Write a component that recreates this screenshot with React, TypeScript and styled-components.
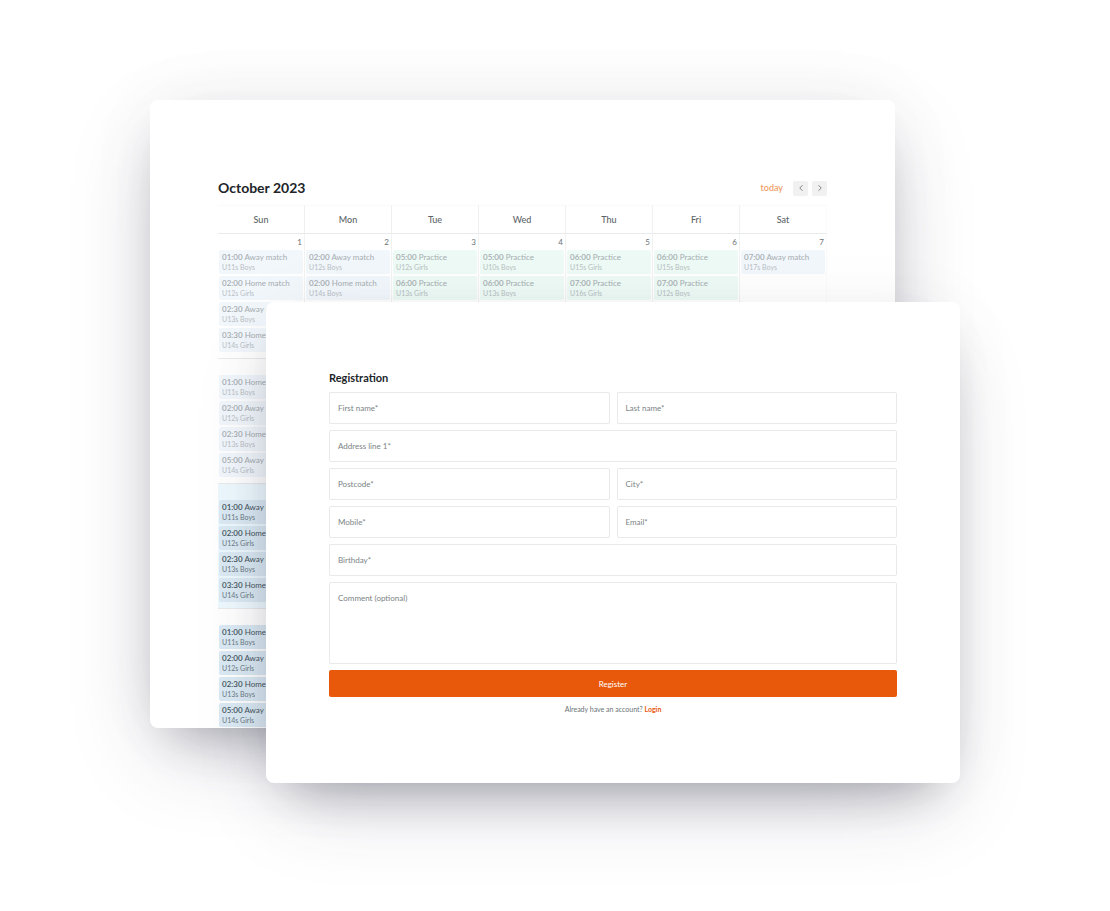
import React from "react";
import styled, { createGlobalStyle, css } from "styled-components";
import { ChevronLeft, ChevronRight } from "lucide-react";

const GlobalStyle = createGlobalStyle`
  *, *::before, *::after { box-sizing: border-box; }
  body {
    margin: 0;
    background: #fff;
    color: #212529;
    font-family: Lato, "Open Sans", sans-serif;
    font-size: 8px;
    line-height: 12px;
  }
  button, input, textarea { font: inherit; color: inherit; }
`;

const Stage = styled.main`
  display: grid;
  grid-template-columns:
    minmax(0, 150fr) minmax(0, 116fr) minmax(0, 629fr) minmax(0, 65fr) minmax(0, 150fr);
  grid-template-rows: 202px auto 55px;
  padding: 100px 0 128px;
  overflow: hidden;
`;

const Card = styled.section`
  background: #fff;
  border-radius: 8px;
`;

const CalendarCard = styled(Card)`
  grid-column: 2 / 4;
  grid-row: 1 / 3;
  padding: 79px 68px 1px;
  box-shadow:
    0 0 80px rgba(20, 20, 40, 0.04),
    0 30px 80px -12px rgba(50, 50, 93, 0.25),
    0 24px 48px -24px rgba(0, 0, 0, 0.26);
`;

const FormCard = styled(Card)`
  grid-column: 3 / 5;
  grid-row: 2 / 4;
  z-index: 1;
  padding: 68px 63px 66px;
  box-shadow:
    0 0 80px rgba(20, 20, 40, 0.03),
    0 36px 80px -20px rgba(50, 50, 93, 0.22),
    0 24px 48px -24px rgba(0, 0, 0, 0.28);
`;

const Toolbar = styled.header`
  display: flex;
  align-items: center;
  gap: 4px;
  height: 18px;
  margin-bottom: 8px;
`;

const MonthTitle = styled.h1`
  flex: 1;
  margin: 0;
  font-size: 14px;
  line-height: 18px;
  font-weight: 700;
`;

const TodayButton = styled.button`
  margin-right: 6px;
  padding: 0;
  border: 0;
  background: none;
  color: #ee9a5c;
  font-size: 9px;
  font-weight: 500;
`;

const NavButton = styled.button`
  display: grid;
  place-items: center;
  width: 15px;
  height: 15px;
  padding: 0;
  border: 0;
  border-radius: 2px;
  background: #f1f1f1;
  color: #6b6b6b;
`;

const MonthTable = styled.table`
  width: 100%;
  table-layout: fixed;
  border-collapse: separate;
  border-spacing: 0;
`;

const DayName = styled.th`
  height: 29px;
  padding: 1px 0 0;
  border-top: 1px solid #fafafa;
  border-bottom: 1px solid #e9eaeb;
  border-right: 1px solid #eff0f0;
  color: #5c6467;
  font-size: 9px;
  font-weight: 500;
  &:last-child { border-right-color: #fafafa; }
`;

const DayCell = styled.td<{ $today?: boolean; $last?: boolean }>`
  height: ${(p) => (p.$last ? "118px" : "125px")};
  padding: 2px 1px 0;
  vertical-align: top;
  border-right: 1px solid #f1f2f2;
  border-bottom: ${(p) => (p.$last ? "0" : "1px solid #e8eaec")};
  background: ${(p) => (p.$today ? "#eef9fe" : "transparent")};
  &:last-child { border-right-color: #fafafa; }
`;

const DayNumber = styled.div`
  height: 14px;
  padding-right: 1px;
  color: #6b7377;
  text-align: right;
`;

const EventList = styled.ul`
  display: grid;
  gap: 2px;
  margin: 0;
  padding: 0;
  list-style: none;
`;

const tones = {
  match: "#f2f7fc",
  practice: "#edfaf5",
  current: "#dbeaf3",
};

const EventItem = styled.li<{ $tone: keyof typeof tones }>`
  height: 24px;
  padding: 2px 3px;
  border-radius: 2px;
  overflow: hidden;
  white-space: nowrap;
  background: ${(p) => tones[p.$tone]};
  color: ${(p) => (p.$tone === "current" ? "#465560" : "#a6adb1")};
`;

const EventTitle = styled.div`
  line-height: 11px;
  time { font-weight: 600; }
`;

const EventTeam = styled.div`
  font-size: 7px;
  line-height: 9px;
  opacity: 0.75;
`;

const FormTitle = styled.h2`
  margin: 0 0 6px;
  font-size: 11px;
  line-height: 16px;
  font-weight: 700;
`;

const FormGrid = styled.form`
  display: grid;
  grid-template-columns: repeat(2, minmax(0, 1fr));
  gap: 6px 7px;
`;

const Field = styled.label<{ $wide?: boolean; $tall?: boolean }>`
  display: flex;
  align-items: ${(p) => (p.$tall ? "flex-start" : "center")};
  gap: 4px;
  height: ${(p) => (p.$tall ? "82px" : "32px")};
  padding: ${(p) => (p.$tall ? "9px 8px" : "0 8px")};
  grid-column: ${(p) => (p.$wide ? "1 / -1" : "auto")};
  border: 1px solid #e8e9e9;
  border-radius: 2px;
  color: #7b8384;
`;

const fieldControl = css`
  flex: 1;
  min-width: 0;
  padding: 0;
  border: 0;
  outline: 0;
  background: none;
`;

const TextInput = styled.input`
  ${fieldControl}
`;

const CommentInput = styled.textarea`
  ${fieldControl}
  height: 100%;
  resize: none;
`;

const RegisterButton = styled.button`
  grid-column: 1 / -1;
  height: 27px;
  padding: 0;
  border: 0;
  border-radius: 2px;
  background: #e8590c;
  color: #fff;
`;

const LoginHint = styled.p`
  margin: 6px 0 0;
  color: #6a7376;
  font-size: 7px;
  text-align: center;
`;

const LoginLink = styled.a`
  color: #e8590c;
  font-weight: 700;
  text-decoration: none;
`;

type Entry = [time: string, title: string, team: string];

interface Day {
  number?: number;
  tone: keyof typeof tones;
  entries: Entry[];
}

const dayNames = ["Sun", "Mon", "Tue", "Wed", "Thu", "Fri", "Sat"];

const firstWeek: Day[] = [
  {
    number: 1,
    tone: "match",
    entries: [
      ["01:00", "Away match", "U11s Boys"],
      ["02:00", "Home match", "U12s Girls"],
      ["02:30", "Away match", "U13s Boys"],
      ["03:30", "Home match", "U14s Girls"],
    ],
  },
  {
    number: 2,
    tone: "match",
    entries: [
      ["02:00", "Away match", "U12s Boys"],
      ["02:00", "Home match", "U14s Boys"],
    ],
  },
  {
    number: 3,
    tone: "practice",
    entries: [
      ["05:00", "Practice", "U12s Girls"],
      ["06:00", "Practice", "U13s Girls"],
    ],
  },
  {
    number: 4,
    tone: "practice",
    entries: [
      ["05:00", "Practice", "U10s Boys"],
      ["06:00", "Practice", "U13s Boys"],
    ],
  },
  {
    number: 5,
    tone: "practice",
    entries: [
      ["06:00", "Practice", "U15s Girls"],
      ["07:00", "Practice", "U16s Girls"],
    ],
  },
  {
    number: 6,
    tone: "practice",
    entries: [
      ["06:00", "Practice", "U15s Boys"],
      ["07:00", "Practice", "U12s Boys"],
    ],
  },
  { number: 7, tone: "match", entries: [["07:00", "Away match", "U17s Boys"]] },
];

const homeFirst: Entry[] = [
  ["01:00", "Home match", "U11s Boys"],
  ["02:00", "Away match", "U12s Girls"],
  ["02:30", "Home match", "U13s Boys"],
  ["05:00", "Away match", "U14s Girls"],
];

const awayFirst: Entry[] = firstWeek[0].entries;

const sundayOnly = (tone: Day["tone"], entries: Entry[]): Day[] =>
  dayNames.map((_, i) => ({ tone, entries: i === 0 ? entries : [] }));

const weeks: Day[][] = [
  firstWeek,
  sundayOnly("match", homeFirst),
  sundayOnly("current", awayFirst),
  sundayOnly("current", homeFirst),
];

const TODAY_WEEK = 2;

function Calendar() {
  return (
    <CalendarCard>
      <Toolbar>
        <MonthTitle>October 2023</MonthTitle>
        <TodayButton type="button">today</TodayButton>
        <NavButton type="button" aria-label="Previous month">
          <ChevronLeft size={10} />
        </NavButton>
        <NavButton type="button" aria-label="Next month">
          <ChevronRight size={10} />
        </NavButton>
      </Toolbar>
      <MonthTable>
        <thead>
          <tr>
            {dayNames.map((name) => (
              <DayName key={name} scope="col">{name}</DayName>
            ))}
          </tr>
        </thead>
        <tbody>
          {weeks.map((days, w) => (
            <tr key={w}>
              {days.map((day, d) => (
                <DayCell key={d} $today={w === TODAY_WEEK && d === 0} $last={w === weeks.length - 1}>
                  <DayNumber>{day.number}</DayNumber>
                  <EventList>
                    {day.entries.map(([time, title, team], i) => (
                      <EventItem key={i} $tone={day.tone}>
                        <EventTitle>
                          <time>{time}</time> {title}
                        </EventTitle>
                        <EventTeam>{team}</EventTeam>
                      </EventItem>
                    ))}
                  </EventList>
                </DayCell>
              ))}
            </tr>
          ))}
        </tbody>
      </MonthTable>
    </CalendarCard>
  );
}

const fields = [
  { name: "firstName", label: "First name*" },
  { name: "lastName", label: "Last name*" },
  { name: "address", label: "Address line 1*", wide: true },
  { name: "postcode", label: "Postcode*" },
  { name: "city", label: "City*" },
  { name: "mobile", label: "Mobile*" },
  { name: "email", label: "Email*" },
  { name: "birthday", label: "Birthday*", wide: true },
];

function Registration() {
  return (
    <FormCard>
      <FormTitle>Registration</FormTitle>
      <FormGrid onSubmit={(e) => e.preventDefault()}>
        {fields.map((f) => (
          <Field key={f.name} $wide={f.wide}>
            {f.label}
            <TextInput name={f.name} />
          </Field>
        ))}
        <Field $wide $tall>
          Comment (optional)
          <CommentInput name="comment" />
        </Field>
        <RegisterButton type="submit">Register</RegisterButton>
      </FormGrid>
      <LoginHint>
        Already have an account? <LoginLink href="#login">Login</LoginLink>
      </LoginHint>
    </FormCard>
  );
}

export default function App() {
  return (
    <>
      <GlobalStyle />
      <Stage>
        <Calendar />
        <Registration />
      </Stage>
    </>
  );
}
